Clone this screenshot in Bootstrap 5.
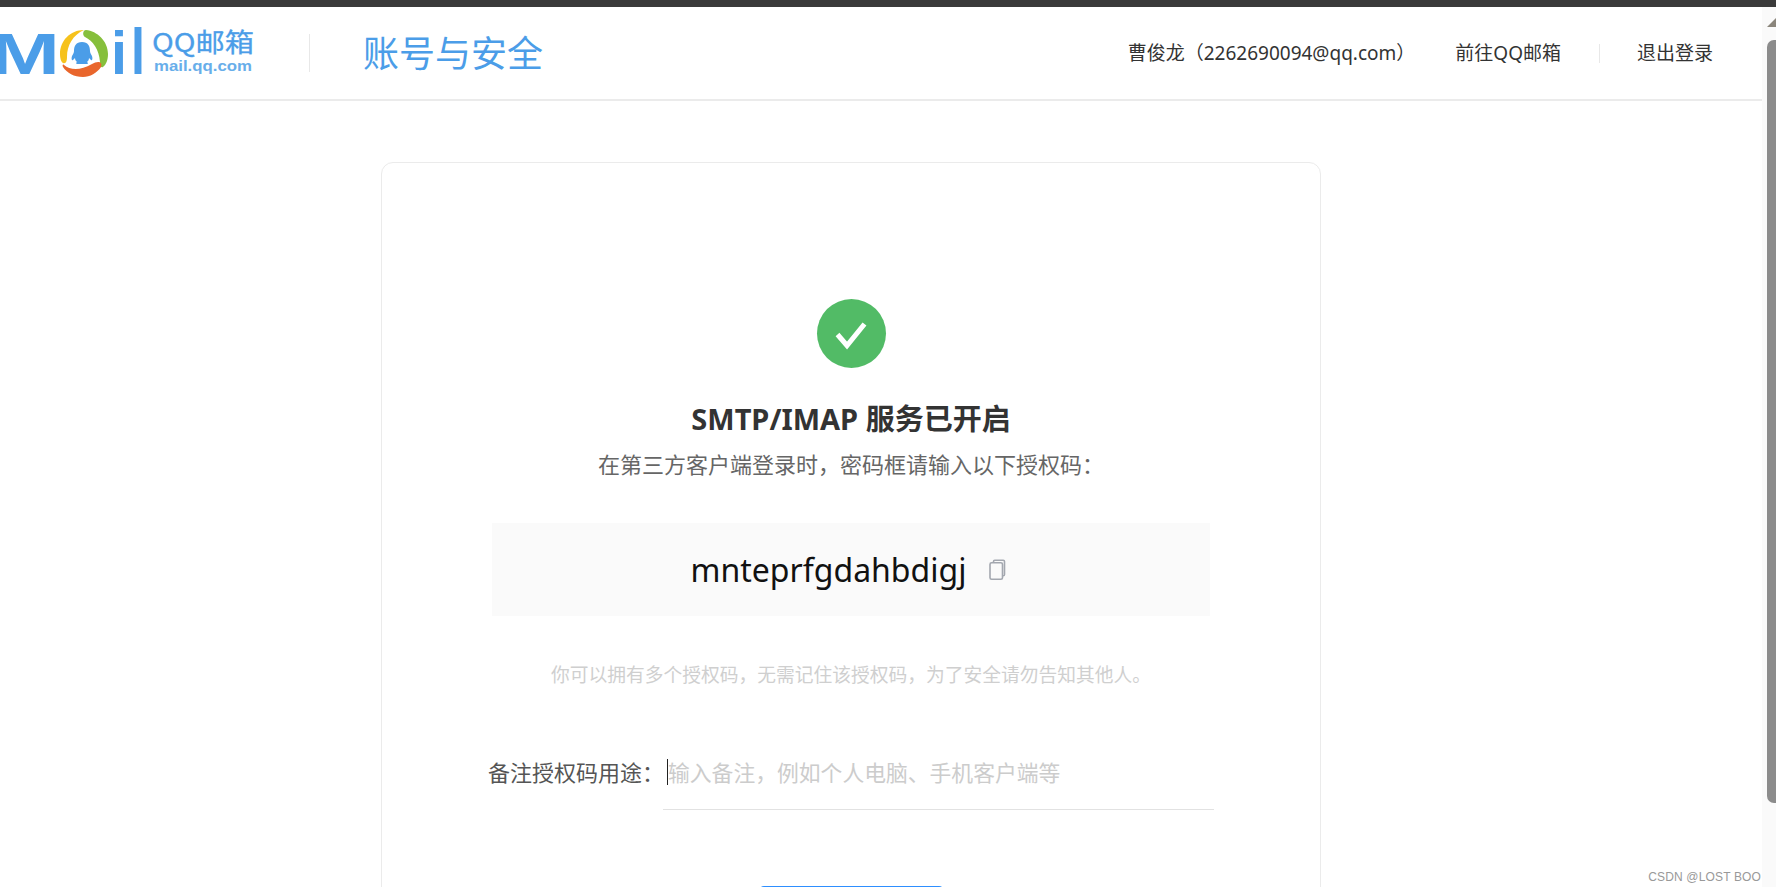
<!doctype html>
<html lang="zh-CN">
<head>
<meta charset="utf-8">
<title>账号与安全</title>
<link href="https://cdn.jsdelivr.net/npm/bootstrap@5.3.0/dist/css/bootstrap.min.css" rel="stylesheet">
<style>
html,body{height:100%;overflow:hidden}
body{font-family:"Noto Sans","Noto Sans CJK SC",sans-serif;background:#fff;color:#333}
.topstrip{height:7px;background:#3a3a3a;flex:none}
.shell{height:880px;overflow:hidden}
.pane{min-width:0;position:relative;overflow:hidden}
.rail{width:14px;background:#fafafa;flex:none;overflow:hidden}
.rail-up{width:0;height:0;margin:11px 0 0 5px;border-left:9px solid transparent;border-right:9px solid transparent;border-bottom:9px solid #8b867c}
.rail-thumb{width:9px;height:763px;margin:13px 0 0 5px;background:#8c8c8c;border-radius:7px 0 0 7px}
.topnav{height:94px;border-bottom:2px solid #ebebeb;padding-right:49px}
.logo{width:254px;height:92px;flex:none}
.vline{width:1px;background:#e8e8e8;flex:none}
.vline-a{height:38px;margin:0 53px 0 55px}
.vline-b{height:19px;margin:0 37px 0 38px}
.pagetitle{font-size:36px;line-height:1;color:#4b9de8;margin:2px 0 0;font-weight:400}
.navtxt{font-size:19px;color:#333;text-decoration:none}
.navgap{margin-right:40px}
.panel{width:940px;margin:61px 0 0 381px;height:900px;border:1px solid #ebebeb;border-radius:12px;padding-top:136px}
.okdot{width:69px;height:69px;background:#52bb66;border-radius:50%}
.headline{font-size:29px;font-weight:700;line-height:38px;color:#333;margin:32px 0 0}
.subline{font-size:22px;line-height:30px;color:#666;margin:11px 0 0}
.codebox{width:718px;height:93px;background:#fafafa;margin:44px auto 0;gap:22px}
.codetxt{font-size:32px;color:#111;margin-left:-3px}
.hint{font-size:18.75px;line-height:28px;color:#cfcfcf;margin:45px 0 0}
.noterow{width:726px;margin:67px auto 0 106px}
.notelabel{font-size:22px;color:#555;width:175px;flex:none;line-height:32px;margin:0;white-space:nowrap}
.notefield{position:relative;flex:1;border-bottom:1px solid #e2e2e2;height:54px}
.noteinput{border:0;outline:0;background:transparent;width:100%;font:21.8px/32px "Noto Sans CJK SC","Noto Sans",sans-serif;padding:0 0 0 5px;display:block;height:32px;color:#333}
.noteinput::placeholder{color:#ccc;opacity:1}
.caret{position:absolute;left:4px;top:3px;width:1px;height:26px;background:#222}
.sendbtn{display:block;width:183px;height:40px;margin:76px 0 0 378px;background:#2e8fff;border:0;border-radius:4px;color:#fff}
.mark-csdn{position:absolute;right:1px;bottom:3px;font:12px "Liberation Sans",sans-serif;letter-spacing:.15px;color:#999}
</style>
</head>
<body class="d-flex flex-column">
<div class="topstrip"></div>
<div class="d-flex shell">
  <div class="pane flex-grow-1">
    <header class="topnav d-flex align-items-center">
      <svg class="logo" viewBox="0 0 254 92" role="img" aria-label="QQ邮箱">
        <text x="-10" y="67" font-family="Liberation Sans" font-weight="700" font-size="58" fill="#4b9de8" textLength="70" lengthAdjust="spacingAndGlyphs">M</text>
        <path d="M84 23C70 23 60 34 60 47c0 4 1 8 3 9 3 1 4-2 4-6 0-12 6-22 17-27z" fill="#f6c21c"/>
        <path d="M86 23c11 1 22 11 22 24 0 6-2 11-5 13-3 1-3-2-3-5-1-13-7-21-15-25-3-2-2-7 1-7z" fill="#86bf3c"/>
        <path d="M64 58c6 5 16 6 28-1 5-3 11-3 9 3-4 6-11 10-18 10-9 0-16-4-20-10-1-2 0-3 1-2z" fill="#e9662c"/>
        <path d="M82 35c6 0 8 4 8 9 0 2 1 3 2 5 1 3 0 5-1 4l-2-2c0 2-1 3-2 4 1 1 2 2-1 2h-8c-3 0-2-1-1-2-1-1-2-2-2-4l-2 2c-1 1-2-1-1-4 1-2 2-3 2-5 0-5 2-9 8-9z" fill="#4b9de8"/>
        <text x="111" y="67" font-family="Liberation Sans" font-weight="700" font-size="62" fill="#4b9de8" textLength="16" lengthAdjust="spacingAndGlyphs">i</text>
        <text x="131" y="67" font-family="Liberation Sans" font-weight="700" font-size="64" fill="#4b9de8" textLength="14" lengthAdjust="spacingAndGlyphs">l</text>
        <text x="152" y="45" font-family="Noto Sans CJK SC" font-size="26" fill="#4b9de8" stroke="#4b9de8" stroke-width=".3" textLength="102" lengthAdjust="spacingAndGlyphs">QQ邮箱</text>
        <text x="154" y="64" font-family="Liberation Sans" font-weight="700" font-size="15" fill="#68aeea" textLength="98" lengthAdjust="spacingAndGlyphs">mail.qq.com</text>
      </svg>
      <span class="vline vline-a align-self-center"></span>
      <h1 class="pagetitle">账号与安全</h1>
      <nav class="ms-auto d-flex align-items-center">
        <span class="navtxt navgap">曹俊龙（2262690094@qq.com）</span>
        <a class="navtxt" href="#">前往QQ邮箱</a>
        <span class="vline vline-b"></span>
        <a class="navtxt" href="#">退出登录</a>
      </nav>
    </header>
    <main class="panel bg-white text-center">
      <div class="okdot d-flex align-items-center justify-content-center mx-auto">
        <svg width="69" height="69" viewBox="0 0 69 69" aria-hidden="true"><path d="M20.500 35.500 30 46.500 47.500 25" fill="none" stroke="#fff" stroke-width="5"/></svg>
      </div>
      <h2 class="headline">SMTP/IMAP 服务已开启</h2>
      <p class="subline">在第三方客户端登录时，密码框请输入以下授权码：</p>
      <div class="codebox d-flex align-items-center justify-content-center">
        <span class="codetxt">mnteprfgdahbdigj</span>
        <svg width="20" height="22" viewBox="0 0 20 22" aria-hidden="true" fill="none" stroke="#a3a7af" stroke-width="1.600"><path d="M5.500 3V2.500c0-.8.500-1.300 1.300-1.300h8.400c.8 0 1.300.5 1.300 1.300v13c0 .8-.5 1.300-1.300 1.300H15"/><rect x="2" y="3.800" width="12.500" height="16.500" rx="1.600"/></svg>
      </div>
      <p class="hint">你可以拥有多个授权码，无需记住该授权码，为了安全请勿告知其他人。</p>
      <div class="noterow d-flex text-start">
        <label class="notelabel" for="note">备注授权码用途：</label>
        <div class="notefield">
          <input id="note" class="noteinput" type="text" placeholder="输入备注，例如个人电脑、手机客户端等">
          <span class="caret"></span>
        </div>
      </div>
      <button class="sendbtn btn" type="button"></button>
    </main>
    <div class="mark-csdn">CSDN @LOST BOO</div>
  </div>
  <div class="rail">
    <div class="rail-up"></div>
    <div class="rail-thumb"></div>
  </div>
</div>
</body>
</html>
